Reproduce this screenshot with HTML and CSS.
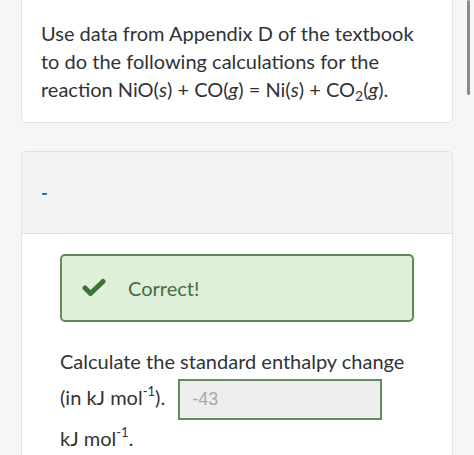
FILE: index.html
```html
<!DOCTYPE html>
<html lang="en">
<head>
<meta charset="utf-8">
<link rel="stylesheet" href="styles.css">
</head>
<body>
<div class="page">
  <div class="card intro">
    <p class="question">Use data from Appendix D of the textbook to do the following calculations for the reaction NiO(<i>s</i>) + CO(<i>g</i>) = Ni(<i>s</i>) + CO<sub>2</sub>(<i>g</i>).</p>
  </div>
  <div class="card part">
    <div class="part-header"><span class="dash"></span></div>
    <div class="part-body">
      <div class="alert">
        <svg class="check" width="24" height="19" viewBox="0 0 24 19"><path d="M3 10 L8.5 15.5 L21 3.5" fill="none" stroke="#3b7337" stroke-width="5" stroke-linecap="round" stroke-linejoin="round"/></svg>
        <span class="alert-text">Correct!</span>
      </div>
      <div class="answer">
        Calculate the standard enthalpy change (in kJ mol<sup>-1</sup>). <span class="input">-43</span> <span class="unit">kJ mol<sup>-1</sup>.</span>
      </div>
    </div>
  </div>
</div>
<div class="scrollbar"></div>
</body>
</html>
```
FILE: styles.css
```css
html, body {
  margin: 0;
  padding: 0;
  background: #f6f6f6;
  overflow: hidden;
}
body {
  font-family: Lato, "Noto Sans", sans-serif;
  color: #2f3336;
  width: 474px;
  height: 455px;
}
.page {
  padding: 0 21px 0 21px;
}
.card {
  background: #fff;
  border: 1px solid #e3e3e3;
  border-radius: 5px;
}
.intro {
  margin-top: -12px;
  padding: 30px 20px 19px 19px;
}
.question {
  margin: 0;
  font-size: 20px;
  line-height: 28px;
}
.question sub {
  font-size: 14px;
  line-height: 0;
  vertical-align: -4px;
}
.part {
  margin-top: 28px;
  height: 303px;
  overflow: hidden;
  border-bottom: none;
  border-radius: 5px 5px 0 0;
}
.part-header {
  height: 81px;
  background: #f3f3f3;
  border-bottom: 1px solid #e3e3e3;
  display: flex;
  align-items: center;
  padding-left: 20px;
}
.dash {
  display: block;
  width: 5px;
  height: 2px;
  background: #2b7ab3;
  margin-top: 2px;
}
.part-body {
  padding: 20px 38px 0 38px;
}
.alert {
  height: 64px;
  background: #dff0d8;
  border: 2px solid #5f8a58;
  border-radius: 5px;
  display: flex;
  align-items: center;
  padding-left: 20px;
}
.check {
  display: block;
  margin-top: -2px;
}
.alert-text {
  margin-left: 22px;
  font-size: 20px;
  color: #486a47;
}
.answer {
  margin-top: 21px;
  font-size: 20px;
  line-height: 36px;
}
.answer sup {
  font-size: 13px;
  line-height: 0;
  vertical-align: 9px;
}
.unit {
  white-space: nowrap;
}
.input {
  display: inline-block;
  box-sizing: border-box;
  width: 204px;
  height: 41px;
  vertical-align: middle;
  margin-left: 8px;
  background: #eeeeee;
  border: 2px solid #6a8763;
  font-family: "Liberation Sans", Arial, sans-serif;
  font-size: 18px;
  line-height: 37px;
  color: #a9a9a9;
  padding-left: 12px;
}
.scrollbar {
  position: absolute;
  left: 467px;
  top: 0;
  width: 3px;
  height: 95px;
  background: #8a8a8a;
  border-radius: 2px;
}
```
